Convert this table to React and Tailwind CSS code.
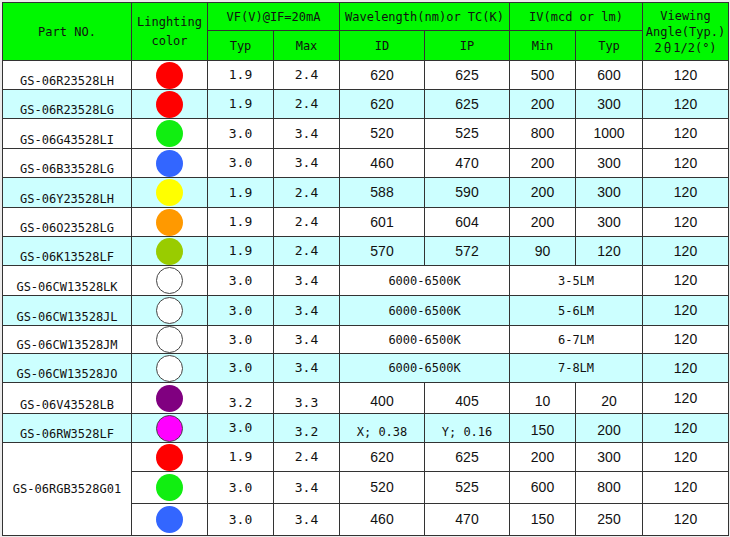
import React from "react";

const mono = { fontFamily: '"DejaVu Sans Mono", "Liberation Mono", monospace' };
const sans = { fontFamily: '"Liberation Sans", Arial, sans-serif' };

const rows = [
  { part: "GS-06R23528LH", dot: "bg-[#ff0000]", vf: ["1.9", "2.4"], wl: ["620", "625"], iv: ["500", "600"], cyan: false },
  { part: "GS-06R23528LG", dot: "bg-[#ff0000]", vf: ["1.9", "2.4"], wl: ["620", "625"], iv: ["200", "300"], cyan: true },
  { part: "GS-06G43528LI", dot: "bg-[#11ee11]", vf: ["3.0", "3.4"], wl: ["520", "525"], iv: ["800", "1000"], cyan: false },
  { part: "GS-06B33528LG", dot: "bg-[#3366ff]", vf: ["3.0", "3.4"], wl: ["460", "470"], iv: ["200", "300"], cyan: false },
  { part: "GS-06Y23528LH", dot: "bg-[#ffff00]", vf: ["1.9", "2.4"], wl: ["588", "590"], iv: ["200", "300"], cyan: true },
  { part: "GS-06O23528LG", dot: "bg-[#ff9900]", vf: ["1.9", "2.4"], wl: ["601", "604"], iv: ["200", "300"], cyan: false },
  { part: "GS-06K13528LF", dot: "bg-[#99cc00]", vf: ["1.9", "2.4"], wl: ["570", "572"], iv: ["90", "120"], cyan: true },
  { part: "GS-06CW13528LK", dot: "white", vf: ["3.0", "3.4"], tc: "6000-6500K", lm: "3-5LM", cyan: false },
  { part: "GS-06CW13528JL", dot: "white", vf: ["3.0", "3.4"], tc: "6000-6500K", lm: "5-6LM", cyan: true },
  { part: "GS-06CW13528JM", dot: "white", vf: ["3.0", "3.4"], tc: "6000-6500K", lm: "6-7LM", cyan: false },
  { part: "GS-06CW13528JO", dot: "white", vf: ["3.0", "3.4"], tc: "6000-6500K", lm: "7-8LM", cyan: true },
  { part: "GS-06V43528LB", dot: "bg-[#800080]", vf: ["3.2", "3.3"], wl: ["400", "405"], iv: ["10", "20"], cyan: false, low: [1, 1, 1, 1, 1, 1] },
  { part: "GS-06RW3528LF", dot: "magenta", vf: ["3.0", "3.2"], wl: ["X; 0.38", "Y; 0.16"], iv: ["150", "200"], cyan: true, low: [0, 1, 1, 1, 1, 1], monoWl: true },
];

const rgb = [
  { dot: "bg-[#ff0000]", vf: ["1.9", "2.4"], wl: ["620", "625"], iv: ["200", "300"] },
  { dot: "bg-[#11ee11]", vf: ["3.0", "3.4"], wl: ["520", "525"], iv: ["600", "800"] },
  { dot: "bg-[#3366ff]", vf: ["3.0", "3.4"], wl: ["460", "470"], iv: ["150", "250"] },
];

function Cell({ children, bg, low, font = sans, className = "" }) {
  return (
    <div
      className={`flex justify-center text-[#111] ${low ? "items-end pb-[1px]" : "items-center"} ${bg} ${className}`}
      style={font}
    >
      {children}
    </div>
  );
}

function Dot({ kind }) {
  if (kind === "white") return <div className="w-[27px] h-[27px] rounded-full bg-white border border-[#444]" />;
  if (kind === "magenta") return <div className="w-[27px] h-[27px] rounded-full bg-[#ff00ff] border border-[#444]" />;
  return <div className={`w-[27px] h-[27px] rounded-full ${kind}`} />;
}

export default function App() {
  const head = "bg-[#00f800] text-[12px] leading-[16px] text-[#111]";
  return (
    <div className="w-[730px] h-[537px] bg-[#ececec] pl-[2px] pt-[2px]">
      <div className="inline-grid bg-[#333] gap-px p-px grid-cols-[128px_75px_65px_65px_84px_84px_65px_66px_85px] grid-rows-[27px_29px_28px_28px_29px_28px_29px_28px_28px_29px_29px_27px_28px_30px_28px_28px_31px_31px]">
        <Cell bg={head} font={mono} className="row-span-2">Part NO.</Cell>
        <Cell bg={head} font={mono} className="row-span-2 flex-col !leading-[19px]">
          <span>Linghting</span>
          <span>color</span>
        </Cell>
        <Cell bg={head} font={mono} className="col-span-2">VF(V)@IF=20mA</Cell>
        <Cell bg={head} font={mono} className="col-span-2 whitespace-nowrap">Wavelength(nm)or TC(K)</Cell>
        <Cell bg={head} font={mono} className="col-span-2">IV(mcd or lm)</Cell>
        <Cell bg={head} font={mono} className="row-span-2 flex-col">
          <span>Viewing</span>
          <span>Angle(Typ.)</span>
          <span className="whitespace-nowrap flex items-center">
            2<span className="font-[family-name:Noto_Sans_CJK_SC] text-[13px] px-[2px]">θ</span>1/2(°)
          </span>
        </Cell>
        {["Typ", "Max", "ID", "IP", "Min", "Typ"].map((t, i) => (
          <Cell key={i} bg={head} font={mono}>{t}</Cell>
        ))}

        {rows.map((r) => {
          const bg = r.cyan ? "bg-[#ccffff]" : "bg-white";
          const low = r.low || [0, 0, 0, 0, 0, 0];
          return (
            <React.Fragment key={r.part}>
              <Cell bg={bg} font={mono} low className="text-[12px] leading-[14px]">{r.part}</Cell>
              <Cell bg={bg}><Dot kind={r.dot} /></Cell>
              <Cell bg={bg} font={mono} low={low[0]} className="text-[13px]">{r.vf[0]}</Cell>
              <Cell bg={bg} font={mono} low={low[1]} className="text-[13px]">{r.vf[1]}</Cell>
              {r.tc ? (
                <>
                  <Cell bg={bg} font={mono} className="col-span-2 text-[12px]">{r.tc}</Cell>
                  <Cell bg={bg} font={mono} className="col-span-2 text-[12px]">{r.lm}</Cell>
                </>
              ) : (
                <>
                  <Cell bg={bg} font={r.monoWl ? mono : sans} low={low[2]} className={r.monoWl ? "text-[12px]" : "text-[14px]"}>{r.wl[0]}</Cell>
                  <Cell bg={bg} font={r.monoWl ? mono : sans} low={low[3]} className={r.monoWl ? "text-[12px]" : "text-[14px]"}>{r.wl[1]}</Cell>
                  <Cell bg={bg} low={low[4]} className="text-[14px]">{r.iv[0]}</Cell>
                  <Cell bg={bg} low={low[5]} className="text-[14px]">{r.iv[1]}</Cell>
                </>
              )}
              <Cell bg={bg} className="text-[14px]">120</Cell>
            </React.Fragment>
          );
        })}

        <Cell bg="bg-white" font={mono} className="row-span-3 text-[12px]">GS-06RGB3528G01</Cell>
        {rgb.map((r, i) => (
          <React.Fragment key={i}>
            <Cell bg="bg-white"><Dot kind={r.dot} /></Cell>
            <Cell bg="bg-white" font={mono} className="text-[13px]">{r.vf[0]}</Cell>
            <Cell bg="bg-white" font={mono} className="text-[13px]">{r.vf[1]}</Cell>
            <Cell bg="bg-white" className="text-[14px]">{r.wl[0]}</Cell>
            <Cell bg="bg-white" className="text-[14px]">{r.wl[1]}</Cell>
            <Cell bg="bg-white" className="text-[14px]">{r.iv[0]}</Cell>
            <Cell bg="bg-white" className="text-[14px]">{r.iv[1]}</Cell>
            <Cell bg="bg-white" className="text-[14px]">120</Cell>
          </React.Fragment>
        ))}
      </div>
    </div>
  );
}
